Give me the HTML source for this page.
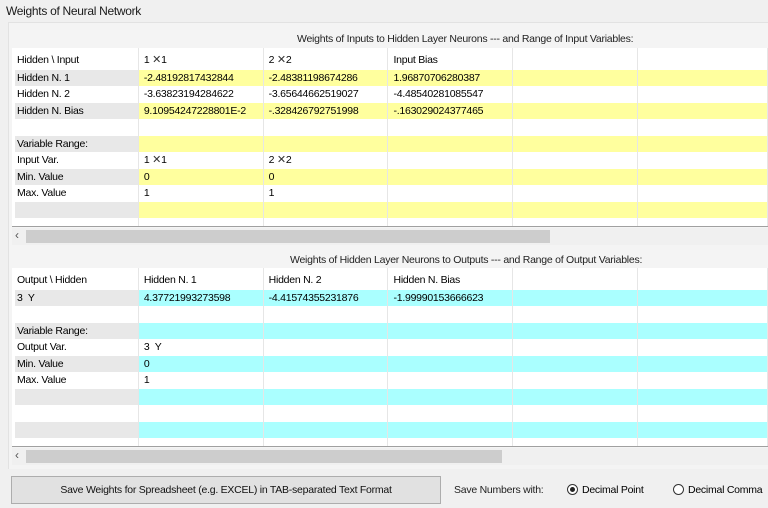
<!DOCTYPE html>
<html><head><style>
body{margin:0;width:768px;height:508px;background:#f0f0f0;font-family:"Liberation Sans",Arial,sans-serif;font-size:10.5px;letter-spacing:-0.25px;color:#000;position:relative;overflow:hidden}
.abs{position:absolute;white-space:nowrap}
.title{left:6px;top:4px;font-size:12px;letter-spacing:-0.3px;color:#1a1a1a}
.panel{left:8px;top:22px;width:760px;height:446px;background:#f4f4f4;border-left:1px solid #e2e2e2;border-top:1px solid #e2e2e2}
.cap{color:#222}
.grid{left:12px;background:#fff;width:756px;border-bottom:1px solid #a0a0a0;overflow:hidden}
.row{position:relative;height:16.44px;display:flex}
.hdr{height:22px}
.c{height:100%;box-sizing:border-box;border-right:1px solid #e6e6e6;padding-left:5px;line-height:17px;white-space:nowrap;overflow:hidden}
.hdr .c{line-height:24px}
.c0{width:124px;margin-left:3px;padding-left:2px}
.c1,.c2,.c3,.c4{width:125px}
.c5{width:130px}
.g .c0{background:#e8e8e8}
.y .c:not(.c0){background:#ffff9e}
.b .c:not(.c0){background:#aaffff}
.x{font-family:"DejaVu Sans",sans-serif;font-size:11px;color:#333;line-height:10px}
.sb{left:12px;width:756px;height:17px;background:#f0f0f0}
.sb .thumb{position:absolute;left:14px;top:2px;height:13px;background:#cdcdcd}
.sb .arr{position:absolute;left:3px;top:0;font-size:12px;color:#555}
.btn{left:11px;top:476px;width:428px;height:26px;border:1px solid #adadad;background:#e1e1e1;text-align:center;line-height:26px;color:#111}
.radio{width:11px;height:11px;border:1px solid #333;border-radius:50%;background:#fff;box-sizing:border-box}
</style></head><body>
<div class="abs title">Weights of Neural Network</div>
<div class="abs panel"></div>
<div class="abs cap" style="left:297px;top:33px">Weights of Inputs to Hidden Layer Neurons --- and Range of Input Variables:</div>
<div class="abs grid" style="top:48px;height:178px">
<div class="row hdr"><div class="c c0">Hidden \ Input</div><div class="c c1">1 <span class="x">✕</span>1</div><div class="c c2">2 <span class="x">✕</span>2</div><div class="c c3">Input Bias</div><div class="c c4"></div><div class="c c5"></div></div>
<div class="row g y"><div class="c c0">Hidden N. 1</div><div class="c c1">-2.48192817432844</div><div class="c c2">-2.48381198674286</div><div class="c c3">1.96870706280387</div><div class="c c4"></div><div class="c c5"></div></div>
<div class="row"><div class="c c0">Hidden N. 2</div><div class="c c1">-3.63823194284622</div><div class="c c2">-3.65644662519027</div><div class="c c3">-4.48540281085547</div><div class="c c4"></div><div class="c c5"></div></div>
<div class="row g y"><div class="c c0">Hidden N. Bias</div><div class="c c1">9.10954247228801E-2</div><div class="c c2">-.328426792751998</div><div class="c c3">-.163029024377465</div><div class="c c4"></div><div class="c c5"></div></div>
<div class="row"><div class="c c0"></div><div class="c c1"></div><div class="c c2"></div><div class="c c3"></div><div class="c c4"></div><div class="c c5"></div></div>
<div class="row g y"><div class="c c0">Variable Range:</div><div class="c c1"></div><div class="c c2"></div><div class="c c3"></div><div class="c c4"></div><div class="c c5"></div></div>
<div class="row"><div class="c c0">Input Var.</div><div class="c c1">1 <span class="x">✕</span>1</div><div class="c c2">2 <span class="x">✕</span>2</div><div class="c c3"></div><div class="c c4"></div><div class="c c5"></div></div>
<div class="row g y"><div class="c c0">Min. Value</div><div class="c c1">0</div><div class="c c2">0</div><div class="c c3"></div><div class="c c4"></div><div class="c c5"></div></div>
<div class="row"><div class="c c0">Max. Value</div><div class="c c1">1</div><div class="c c2">1</div><div class="c c3"></div><div class="c c4"></div><div class="c c5"></div></div>
<div class="row g y"><div class="c c0"></div><div class="c c1"></div><div class="c c2"></div><div class="c c3"></div><div class="c c4"></div><div class="c c5"></div></div>
<div class="row"><div class="c c0"></div><div class="c c1"></div><div class="c c2"></div><div class="c c3"></div><div class="c c4"></div><div class="c c5"></div></div>
</div>
<div class="abs sb" style="top:228px"><span class="arr">&lsaquo;</span><div class="thumb" style="width:524px"></div></div>
<div class="abs cap" style="left:290px;top:254px">Weights of Hidden Layer Neurons to Outputs --- and Range of Output Variables:</div>
<div class="abs grid" style="top:268px;height:178px">
<div class="row hdr"><div class="c c0">Output \ Hidden</div><div class="c c1">Hidden N. 1</div><div class="c c2">Hidden N. 2</div><div class="c c3">Hidden N. Bias</div><div class="c c4"></div><div class="c c5"></div></div>
<div class="row g b"><div class="c c0">3 &nbsp;Y</div><div class="c c1">4.37721993273598</div><div class="c c2">-4.41574355231876</div><div class="c c3">-1.99990153666623</div><div class="c c4"></div><div class="c c5"></div></div>
<div class="row"><div class="c c0"></div><div class="c c1"></div><div class="c c2"></div><div class="c c3"></div><div class="c c4"></div><div class="c c5"></div></div>
<div class="row g b"><div class="c c0">Variable Range:</div><div class="c c1"></div><div class="c c2"></div><div class="c c3"></div><div class="c c4"></div><div class="c c5"></div></div>
<div class="row"><div class="c c0">Output Var.</div><div class="c c1">3 &nbsp;Y</div><div class="c c2"></div><div class="c c3"></div><div class="c c4"></div><div class="c c5"></div></div>
<div class="row g b"><div class="c c0">Min. Value</div><div class="c c1">0</div><div class="c c2"></div><div class="c c3"></div><div class="c c4"></div><div class="c c5"></div></div>
<div class="row"><div class="c c0">Max. Value</div><div class="c c1">1</div><div class="c c2"></div><div class="c c3"></div><div class="c c4"></div><div class="c c5"></div></div>
<div class="row g b"><div class="c c0"></div><div class="c c1"></div><div class="c c2"></div><div class="c c3"></div><div class="c c4"></div><div class="c c5"></div></div>
<div class="row"><div class="c c0"></div><div class="c c1"></div><div class="c c2"></div><div class="c c3"></div><div class="c c4"></div><div class="c c5"></div></div>
<div class="row g b"><div class="c c0"></div><div class="c c1"></div><div class="c c2"></div><div class="c c3"></div><div class="c c4"></div><div class="c c5"></div></div>
<div class="row"><div class="c c0"></div><div class="c c1"></div><div class="c c2"></div><div class="c c3"></div><div class="c c4"></div><div class="c c5"></div></div>
</div>
<div class="abs sb" style="top:448px"><span class="arr">&lsaquo;</span><div class="thumb" style="width:476px"></div></div>
<div class="abs btn">Save Weights for Spreadsheet (e.g. EXCEL) in TAB-separated Text Format</div>
<div class="abs" style="left:454px;top:484px;color:#222">Save Numbers with:</div>
<div class="abs radio" style="left:567px;top:484px"><div style="width:5px;height:5px;border-radius:50%;background:#222;margin:2px"></div></div>
<div class="abs" style="left:582px;top:484px">Decimal Point</div>
<div class="abs radio" style="left:673px;top:484px"></div>
<div class="abs" style="left:688px;top:484px">Decimal Comma</div>
</body></html>
